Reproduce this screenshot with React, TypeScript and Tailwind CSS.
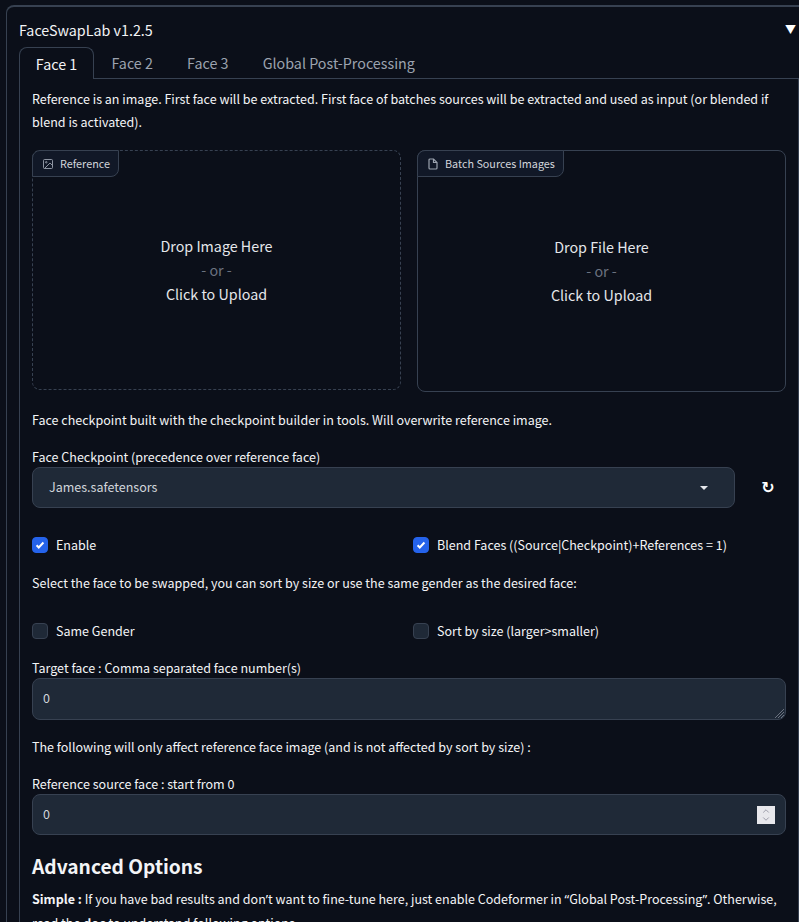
import { ChevronDown, ChevronUp } from "lucide-react";

const FONT = "font-['Noto_Sans_CJK_SC','Noto_Sans',sans-serif]";

function ImageIcon() {
  return (
    <svg width="12" height="12" viewBox="0 0 24 24" fill="none" stroke="#9ca3af" strokeWidth="1.8">
      <rect x="3" y="3" width="18" height="18" rx="2" />
      <circle cx="8.5" cy="8.5" r="1.5" />
      <path d="M21 15l-5-5L5 21" />
    </svg>
  );
}

function FileIcon() {
  return (
    <svg width="12" height="14" viewBox="0 0 24 24" fill="none" stroke="#9ca3af" strokeWidth="2.4">
      <path d="M13 2H6a2 2 0 0 0-2 2v16a2 2 0 0 0 2 2h12a2 2 0 0 0 2-2V9z" />
      <path d="M13 2v7h7" />
    </svg>
  );
}

function Quote({ children }: { children: string }) {
  return <span className="font-['Noto_Sans',sans-serif] text-[13px]">{children}</span>;
}

function UploadBox({
  label,
  icon,
  title,
  dashed,
  height,
}: {
  label: string;
  icon: React.ReactNode;
  title: string;
  dashed?: boolean;
  height: string;
}) {
  return (
    <div
      className={`relative flex-1 flex flex-col items-center justify-center rounded-lg border border-[#374151] ${height} ${
        dashed ? "border-dashed" : ""
      }`}
    >
      <div className="absolute -left-px -top-px flex h-[27px] items-center gap-[6px] rounded-br-lg rounded-tl-lg border border-[#374151] bg-[#111827] pl-[9px] pr-[8px] text-[10.8px] text-[#d1d5db]">
        {icon}
        {label}
      </div>
      <div className="flex flex-col items-center text-[14.3px] leading-6 text-[#e5e7eb]">
        <span>{title}</span>
        <span className="text-[#6b7280]">- or -</span>
        <span>Click to Upload</span>
      </div>
    </div>
  );
}

function Check({ label, checked }: { label: string; checked?: boolean }) {
  return (
    <label className="flex flex-1 items-center gap-2 text-[#f3f4f6]">
      <span
        className={`flex h-4 w-4 items-center justify-center rounded-[4px] border ${
          checked ? "border-[#2563eb] bg-[#2563eb]" : "border-[#374151] bg-[#1f2937]"
        }`}
      >
        {checked && (
          <svg width="10" height="10" viewBox="0 0 16 16" fill="none" stroke="#fff" strokeWidth="3.2">
            <path d="M2.5 8.5l3.5 3.5 7.5-8" />
          </svg>
        )}
      </span>
      {label}
    </label>
  );
}

export default function App() {
  return (
    <div className={`h-[922px] w-[799px] overflow-hidden bg-[#0b0f19] pl-[6px] pt-[5px] ${FONT}`}>
      <div className="w-[820px] h-[940px] rounded-tl-lg border-l border-t-2 border-[#374151] pl-3 pt-3">
        {/* Accordion header */}
        <div className="flex h-[21px] w-[780px] items-center justify-between text-[14.3px] text-[#f3f4f6]">
          <span>FaceSwapLab v1.2.5</span>
          <span className="mr-[3px] text-[11px] text-white">▼</span>
        </div>

        {/* Tabs */}
        <div className="mt-[7px] flex h-[32px] w-[780px] items-stretch border-b border-[#374151] text-[14.3px] text-[#9ca3af]">
          <div className="mb-[-1px] flex w-[75px] items-center justify-center rounded-t-lg border border-b-0 border-[#374151] bg-[#0b0f19] text-[#f3f4f6]">
            Face 1
          </div>
          <div className="ml-[17.5px] flex items-center gap-[34.2px]">
            <span>Face 2</span>
            <span>Face 3</span>
            <span>Global Post-Processing</span>
          </div>
        </div>

        {/* Tab panel */}
        <div className="w-[780px] border-x border-[#374151] px-3 pt-[2px] text-[12.53px] text-[#f3f4f6]">
          <p className="mt-[6px] leading-[23px]">
            Reference is an image. First face will be extracted. First face of batches sources will be extracted and
            used as input (or blended if blend is activated).
          </p>

          <div className="mt-[17px] flex w-[754px] gap-4">
            <UploadBox label="Reference" icon={<ImageIcon />} title="Drop Image Here" dashed height="h-[240px]" />
            <UploadBox label="Batch Sources Images" icon={<FileIcon />} title="Drop File Here" height="h-[242px]" />
          </div>

          <p className="mt-[16px] leading-[23px]">
            Face checkpoint built with the checkpoint builder in tools. Will overwrite reference image.
          </p>

          <div className="mt-[16px] leading-[20px]">Face Checkpoint (precedence over reference face)</div>
          <div className="flex w-[754px] items-center">
            <div className="flex h-[41px] flex-1 items-center justify-between rounded-lg border border-[#374151] bg-[#1f2937] pl-4 pr-[26px] text-[#d1d5db]">
              <span>James.safetensors</span>
              <span className="h-0 w-0 border-x-[4px] border-t-[4px] border-x-transparent border-t-[#e5e7eb]" />
            </div>
            <div className="flex w-[51px] items-center justify-center pl-[15px] font-['DejaVu_Sans',sans-serif] text-[16px] font-bold text-white">
              ↻
            </div>
          </div>

          <div className="mt-[27px] flex h-[20px] w-[754px] gap-[16px]">
            <div className="flex w-[365px]">
              <Check label="Enable" checked />
            </div>
            <Check label="Blend Faces ((Source|Checkpoint)+References = 1)" checked />
          </div>

          <p className="mt-[16px] leading-[23px]">
            Select the face to be swapped, you can sort by size or use the same gender as the desired face:
          </p>

          <div className="mt-[27px] flex h-[20px] w-[754px] gap-[16px]">
            <div className="flex w-[365px]">
              <Check label="Same Gender" />
            </div>
            <Check label="Sort by size (larger>smaller)" />
          </div>

          <div className="mt-[17px] leading-[20px]">Target face : Comma separated face number(s)</div>
          <div className="relative flex h-[42px] w-[754px] items-center rounded-lg border border-[#374151] bg-[#1f2937] px-[10px] pb-[2px] text-[#d1d5db]">
            0
            <svg className="absolute bottom-0 right-0" width="12" height="12" viewBox="0 0 12 12" stroke="#6b7280">
              <path d="M2 11L11 2M5 11l6-6M8 11l3-3" />
            </svg>
          </div>

          <p className="mt-[15px] leading-[23px]">
            The following will only affect reference face image (and is not affected by sort by size) :
          </p>

          <div className="mt-[16px] leading-[20px]">Reference source face : start from 0</div>
          <div className="flex h-[41px] w-[754px] items-center justify-between rounded-lg border border-[#374151] bg-[#1f2937] pl-[10px] pr-[10px] text-[#d1d5db]">
            0
            <span className="flex h-[18px] w-[18px] flex-col items-center justify-center bg-[#e8e8ec] text-[#8f8f9d]">
              <ChevronUp size={12} strokeWidth={2} className="-mb-[1px]" />
              <ChevronDown size={12} strokeWidth={2} className="-mt-[1px]" />
            </span>
          </div>

          <h2 className="mt-[15px] text-[19.2px] font-semibold leading-[32px] text-[#f3f4f6]">Advanced Options</h2>
          <p className="mt-[5px] leading-[23px]">
            <strong className="font-semibold">Simple :</strong> If you have bad results and don<Quote>’</Quote>t want to
            fine-tune here, just enable Codeformer in <Quote>“</Quote>Global Post-Processing<Quote>”</Quote>. Otherwise,
            read the <strong className="font-semibold">doc</strong> to understand following options.
          </p>
        </div>
      </div>
    </div>
  );
}
